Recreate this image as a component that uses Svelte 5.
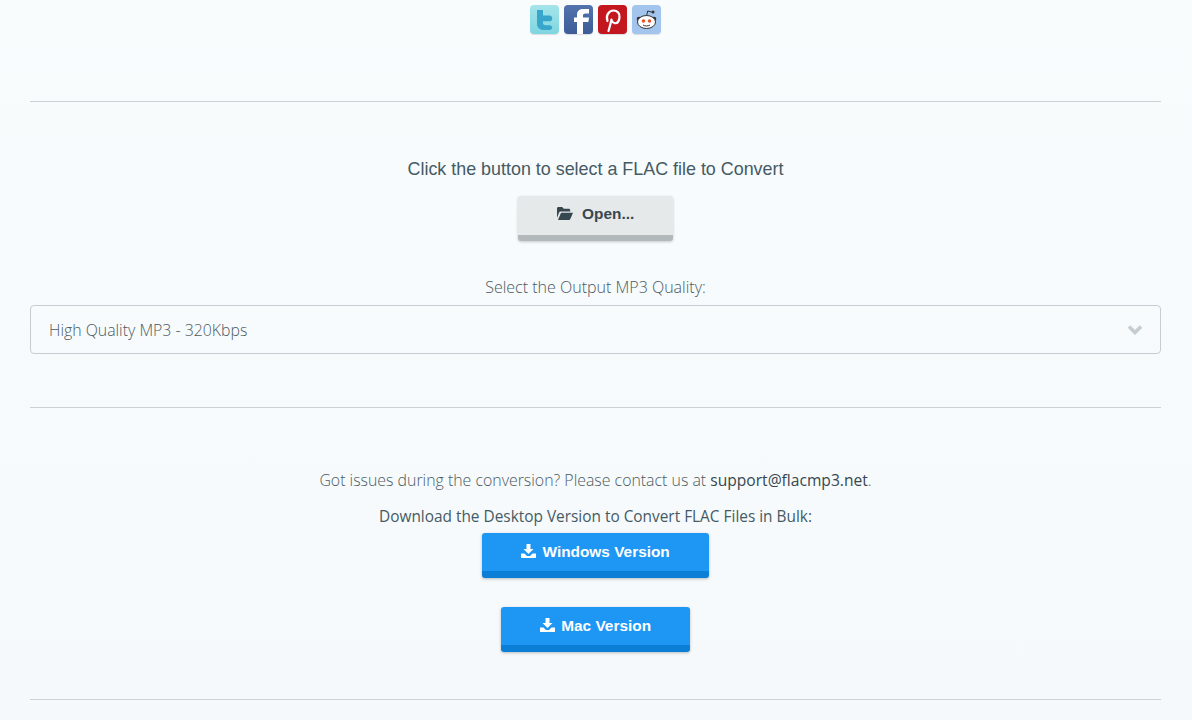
<script>
	const divider = 'divider';
</script>

<div class="page">
	<div class="social">
		<a class="icon twitter" href="#t" aria-label="Twitter">
			<svg viewBox="0 0 29 29" width="29" height="29">
				<path d="M7 5h6v5.500h6.500c1.700 0 2.700 1.200 2.700 2.900s-1 2.900-2.700 2.900H13v1.700c0 1.300.9 2.200 2.300 2.200h4.200c1.700 0 2.700 1.100 2.700 2.400s-1 2.400-2.700 2.400H14c-4.500 0-7-2.300-7-6.500z" fill="#38a6cb"/>
			</svg>
		</a>
		<a class="icon facebook" href="#f" aria-label="Facebook">
			<svg viewBox="0 0 29 29" width="29" height="29">
				<path d="M13 29V17h-3v-4.500h3V9.500C13 6 15.500 4 19.500 4H25v4.500h-3.500c-1.800 0-2.500.9-2.500 2.100v1.900h6l-.6 4.500H19v12z" fill="#fff"/>
			</svg>
		</a>
		<a class="icon pinterest" href="#p" aria-label="Pinterest">
			<svg viewBox="0 0 29 29" width="29" height="29">
				<path d="M10.500 26c.8-2.500 1.800-6.500 3-11.500M9.500 16C7.500 11 10.500 5.500 15.500 5.500c4 0 6.500 2.800 6 7-.5 3.800-2.500 6-4.800 5.700-1.300-.2-2.200-1-2.500-2.200" fill="none" stroke="#fff" stroke-width="2.200" stroke-linecap="round"/>
			</svg>
		</a>
		<a class="icon reddit" href="#r" aria-label="Reddit">
			<svg viewBox="0 0 29 29" width="29" height="29">
				<path d="M14.500 11l1.200-5 4 1" fill="none" stroke="#333" stroke-width="1"/>
				<circle cx="21" cy="7" r="1.500" fill="#333"/>
				<circle cx="7" cy="14" r="2.300" fill="#333"/>
				<circle cx="22" cy="14" r="2.300" fill="#333"/>
				<ellipse cx="14.500" cy="17" rx="9" ry="6.500" fill="#fff" stroke="#333"/>
				<circle cx="11.500" cy="16" r="1.800" fill="#e8552d"/>
				<circle cx="17.500" cy="16" r="1.800" fill="#e8552d"/>
				<path d="M11 20c2 1.300 5 1.300 7 0" fill="none" stroke="#333"/>
			</svg>
		</a>
	</div>

	<hr class={divider} />

	<section class="convert">
		<p class="select-text">Click the button to select a FLAC file to Convert</p>
		<button class="btn btn-open">
			<svg class="btn-icon" viewBox="0 0 16 13" width="16" height="13">
				<path d="M0 11V1.500C0 .7.600 0 1.400 0h3.800l1.600 1.800h5c.8 0 1.400.6 1.400 1.400V4.500H4C3 4.500 2.400 5 2 5.800zM1 13l2.700-6.600c.2-.5.600-.7 1-.7H16l-2.700 6.400c-.2.600-.7.900-1.300.9z" fill="#37474f"/>
			</svg>
			Open...
		</button>
		<label class="quality-label" for="quality">Select the Output MP3 Quality:</label>
		<div class="select-box" id="quality">
			<span>High Quality MP3 - 320Kbps</span>
			<svg viewBox="0 0 16 11" width="16" height="11">
				<path d="M2 2.500l6 6 6-6" fill="none" stroke="#c5cdd1" stroke-width="3.600"/>
			</svg>
		</div>
	</section>

	<hr class={divider} />

	<section class="desktop">
		<p class="issues">Got issues during the conversion? Please contact us at <a href="#m">support@flacmp3.net</a>.</p>
		<p class="bulk">Download the Desktop Version to Convert FLAC Files in Bulk:</p>
		<button class="btn btn-blue btn-win">
			<svg class="btn-icon" viewBox="0 0 15 14" width="15" height="14">
				<path d="M5.500 0h4v5h3L7.500 10 2.500 5h3zM0 9.500h3.500L6 12h3l2.500-2.500H15V14H0z" fill="#fff"/>
			</svg>
			Windows Version
		</button>
		<button class="btn btn-blue btn-mac">
			<svg class="btn-icon" viewBox="0 0 15 14" width="15" height="14">
				<path d="M5.500 0h4v5h3L7.500 10 2.500 5h3zM0 9.500h3.500L6 12h3l2.500-2.500H15V14H0z" fill="#fff"/>
			</svg>
			Mac Version
		</button>
	</section>

	<hr class="divider last" />
</div>

<style>
	:global(body) {
		margin: 0;
		background: linear-gradient(#f8fcfd, #f5f9fb);
	}

	.page {
		height: 720px;
		overflow: hidden;
		padding: 0 31px 0 30px;
		box-sizing: border-box;
		font-family: "Open Sans", sans-serif;
		color: #37474f;
	}

	.social {
		display: flex;
		justify-content: center;
		gap: 5px;
		padding-top: 5px;
		height: 30px;
	}

	.icon {
		display: block;
		width: 29px;
		height: 29px;
		border-radius: 4px;
		overflow: hidden;
		box-shadow: 0 1px 1px rgba(0, 0, 0, 0.12);
	}

	.twitter {
		background: linear-gradient(#a5e4ea, #7fd6e0);
	}

	.facebook {
		background: linear-gradient(#5273ad, #3d5c98);
	}

	.pinterest {
		background: #c4161f;
	}

	.reddit {
		background: #a3c4ec;
	}

	.divider {
		border: none;
		border-top: 1px solid #ccd2d4;
		margin: 66px 0 0;
	}

	.convert {
		display: flex;
		flex-direction: column;
		align-items: center;
	}

	.select-text {
		font-family: "Liberation Sans", sans-serif;
		font-size: 17.900px;
		line-height: 24px;
		margin: 55px 0 0;
		color: #455a64;
	}

	.btn {
		display: block;
		border: none;
		border-radius: 3px;
		font-family: "Liberation Sans", sans-serif;
		font-size: 15.400px;
		font-weight: 700;
		text-align: center;
		padding: 0;
	}

	.btn-icon {
		margin-right: 2px;
		vertical-align: -1px;
	}

	.btn-open {
		width: 155px;
		height: 45px;
		margin-top: 15px;
		padding-bottom: 4px;
		background: #e6e9ea;
		color: #37474f;
		border-bottom: 6px solid #b3b9ba;
		box-shadow: 0 1px 3px rgba(0, 0, 0, 0.2);
	}

	.btn-open .btn-icon {
		margin-right: 5px;
	}

	.quality-label {
		font-size: 16px;
		font-weight: 300;
		line-height: 24px;
		margin-top: 34px;
		color: #4b5a62;
	}

	.select-box {
		display: flex;
		align-items: center;
		justify-content: space-between;
		align-self: stretch;
		height: 47px;
		margin-top: 6px;
		padding: 0 17px 0 18px;
		border: 1px solid #c6cdd0;
		border-radius: 4px;
		font-size: 15.850px;
		font-weight: 300;
		color: #4b5a62;
	}

	.convert + .divider {
		margin-top: 53px;
	}

	.desktop {
		display: flex;
		flex-direction: column;
		align-items: center;
	}

	.issues {
		font-size: 15.880px;
		font-weight: 300;
		line-height: 24px;
		margin: 60px 0 0;
		color: #4b5a62;
	}

	.issues a {
		font-size: 15.600px;
		font-weight: 400;
		color: #37474f;
		text-decoration: none;
	}

	.bulk {
		font-size: 15.400px;
		line-height: 24px;
		margin: 13px 0 0;
		color: #455a64;
	}

	.btn-blue {
		background: #1e96f3;
		color: #fff;
		border-bottom: 7px solid #0b7fd6;
		box-shadow: 0 1px 3px rgba(0, 0, 0, 0.25);
		padding-bottom: 0;
	}

	.btn-win {
		width: 227px;
		height: 45px;
		margin-top: 4px;
	}

	.btn-mac {
		width: 189px;
		height: 45px;
		margin-top: 29px;
	}

	.last {
		margin-top: 47px;
	}
</style>
